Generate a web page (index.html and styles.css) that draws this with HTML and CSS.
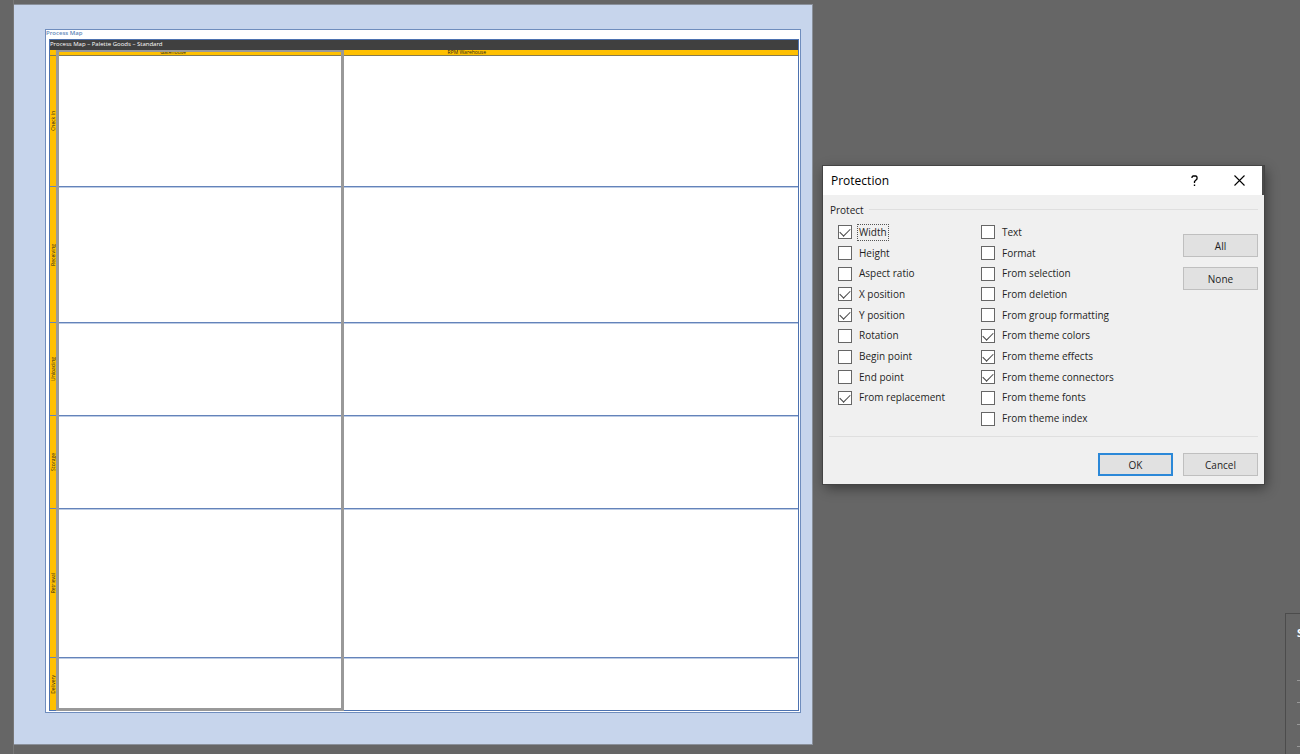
FILE: index.html
```html
<!DOCTYPE html>
<html lang="en">
<head>
  <meta charset="UTF-8" />
  <meta name="viewport" content="width=device-width,initial-scale=1.0" />
  <title>Process Map</title>
  <link rel="stylesheet" href="styles.css">
</head>
<body>
  <main class="workspace">
    <section class="sheet">
      <div class="frame">
        <h1 class="frame-title">Process Map</h1>
        <div class="map">
          <h2 class="map-title">Process Map – Palette Goods – Standard</h2>
          <div class="lanes">
            <div class="corner"></div>
            <div class="lane-head gatehouse">Gatehouse</div>
            <div class="lane-head warehouse">RPM Warehouse</div>

            <div class="phase"><span>Check In</span></div><div class="cell"></div><div class="cell"></div>
            <div class="phase"><span>Receiving</span></div><div class="cell"></div><div class="cell"></div>
            <div class="phase"><span>Unloading</span></div><div class="cell"></div><div class="cell"></div>
            <div class="phase"><span>Storage</span></div><div class="cell"></div><div class="cell"></div>
            <div class="phase"><span>Retrieval</span></div><div class="cell"></div><div class="cell"></div>
            <div class="phase last"><span>Delivery</span></div><div class="cell last"></div><div class="cell last"></div>
            <div class="selection"></div>
          </div>
        </div>
      </div>
    </section>
  </main>

  <form class="dialog" role="dialog" aria-labelledby="dialogTitle">
    <header class="titlebar">
      <h2 id="dialogTitle">Protection</h2>
      <button type="button" class="tb-btn" aria-label="Help">
        <svg width="7" height="12" viewBox="0 0 7 12"><path d="M1 3V2L2 1h3l1 1v2L3.500 6.500V8" fill="none" stroke="#000" stroke-width="1.300"/><path d="M2.800 9.500h1.400V11H2.800z"/></svg>
      </button>
      <button type="button" class="tb-btn" aria-label="Close">
        <svg width="11" height="11" viewBox="0 0 11 11"><path d="M.5.5l10 10M10.500.5l-10 10" fill="none" stroke="#000" stroke-width="1.100"/></svg>
      </button>
    </header>

    <div class="dialog-body">
      <fieldset>
        <legend>Protect</legend>
        <div class="options">
          <div class="checks">
            <label class="focused"><input type="checkbox" checked><span>Width</span></label>
            <label><input type="checkbox"><span>Height</span></label>
            <label><input type="checkbox"><span>Aspect ratio</span></label>
            <label><input type="checkbox" checked><span>X position</span></label>
            <label><input type="checkbox" checked><span>Y position</span></label>
            <label><input type="checkbox"><span>Rotation</span></label>
            <label><input type="checkbox"><span>Begin point</span></label>
            <label><input type="checkbox"><span>End point</span></label>
            <label><input type="checkbox" checked><span>From replacement</span></label>
          </div>
          <div class="checks">
            <label><input type="checkbox"><span>Text</span></label>
            <label><input type="checkbox"><span>Format</span></label>
            <label><input type="checkbox"><span>From selection</span></label>
            <label><input type="checkbox"><span>From deletion</span></label>
            <label><input type="checkbox"><span>From group formatting</span></label>
            <label><input type="checkbox" checked><span>From theme colors</span></label>
            <label><input type="checkbox" checked><span>From theme effects</span></label>
            <label><input type="checkbox" checked><span>From theme connectors</span></label>
            <label><input type="checkbox"><span>From theme fonts</span></label>
            <label><input type="checkbox"><span>From theme index</span></label>
          </div>
          <div class="side-buttons">
            <button type="button" class="btn">All</button>
            <button type="button" class="btn">None</button>
          </div>
        </div>
      </fieldset>
      <footer class="actions">
        <button type="submit" class="btn default">OK</button>
        <button type="button" class="btn">Cancel</button>
      </footer>
    </div>
  </form>

  <aside class="panel">
    <h2>S</h2>
    <div class="panel-rows"><i></i><i></i><i></i><i></i></div>
  </aside>
</body>
</html>
```
FILE: styles.css
```css
* { box-sizing: border-box; margin: 0; padding: 0; }
body {
  position: relative;
  min-height: 100vh;
  background: #666;
  font-family: "Open Sans", "Noto Sans", sans-serif;
  font-size: 10px;
  color: #1e1e1e;
  overflow: hidden;
}
h1, h2 { font-weight: normal; }

/* drawing page */
.workspace {
  display: flex;
  min-height: 100vh;
  margin-left: 13px;
  padding: 4px 0 9px;
  border-left: 1px solid #777;
}
.sheet {
  display: flex;
  width: 62.1%;
  padding: 24px 11px 31px 31px;
  background: #c7d5ec;
  border: 1px solid #8a909a;
  border-left: none;
}
.frame {
  flex: 1;
  display: flex;
  flex-direction: column;
  padding: 0 1px 1px 3px;
  background: #fff;
  border: 1px solid #6f8dbd;
}
.frame-title {
  height: 9px;
  margin-left: -3px;
  font-size: 6px;
  line-height: 7px;
  font-weight: 600;
  color: #6288b8;
}
.map {
  flex: 1;
  display: flex;
  flex-direction: column;
  border: 1px solid #4d72b0;
}
.map-title {
  height: 10px;
  font-size: 6px;
  line-height: 9px;
  color: #fff;
  background: #404040;
}
.lanes {
  position: relative;
  flex: 1;
  display: grid;
  grid-template-columns: 8px 287fr 455fr;
  grid-template-rows: 6px 131fr 136fr 93fr 93fr 149fr 52fr;
}
.corner, .lane-head {
  background: #ffc000;
  border-bottom: 1px solid #857a50;
}
.lane-head {
  font-size: 5px;
  line-height: 5px;
  text-align: center;
  overflow: hidden;
}
.gatehouse { padding-right: 56px; }
.warehouse { padding-right: 208px; }
.phase {
  display: flex;
  align-items: center;
  justify-content: center;
  padding-right: 2px;
  background: #ffc000;
}
.phase span {
  writing-mode: vertical-rl;
  transform: rotate(180deg);
  font-size: 5px;
  line-height: 6px;
}
.phase, .cell { border-bottom: 1px solid #6483ba; }
.cell { box-shadow: 0 1px #bccbe4; }
.last {
  border-bottom: none;
  box-shadow: none;
}
.selection {
  position: absolute;
  inset: 0 auto -1px 6px;
  width: calc((100% - 8px) * 287 / 742 + 2px);
  border: 3px solid #999;
  border-top-width: 2px;
}

/* protection dialog */
.dialog {
  position: absolute;
  top: 166px;
  right: 36px;
  width: 441px;
  background: #f0f0f0;
  box-shadow: 0 0 0 1px #444, 2px 4px 12px rgba(0, 0, 0, .45);
}
.titlebar {
  display: flex;
  align-items: center;
  height: 29px;
  padding-left: 8px;
  background: #fff;
  border-right: 2px solid #4a4a4a;
}
.titlebar h2 {
  flex: 1;
  font-size: 12px;
  line-height: 16px;
  color: #000;
}
.tb-btn {
  display: flex;
  align-items: center;
  justify-content: center;
  width: 45px;
  height: 28px;
  border: none;
  background: none;
}
.dialog-body { padding: 7px 6px 8px; }
fieldset {
  border: none;
  border-bottom: 1px solid #dfdfdf;
}
legend {
  display: flex;
  align-items: center;
  gap: 5px;
  width: 100%;
  height: 15px;
  padding-left: 1px;
}
legend::after {
  content: "";
  flex: 1;
  height: 1px;
  background: #dfdfdf;
}
.options {
  display: flex;
  padding: 5px 0 7px 9px;
}
.checks {
  display: grid;
  grid-template-rows: repeat(10, 1fr);
  width: 143px;
  height: 207px;
}
.checks label {
  display: flex;
  align-items: center;
  gap: 5px;
  white-space: nowrap;
}
.checks span {
  padding: 0 1px;
  border: 1px solid transparent;
  line-height: 15px;
}
.checks .focused span { border: 1px dotted #555; }
input[type="checkbox"] {
  appearance: none;
  width: 14px;
  height: 14px;
  background: #fff;
  border: 1px solid #666;
}
input[type="checkbox"]:checked::before {
  content: "";
  display: block;
  width: 9px;
  height: 5px;
  margin: 2px 0 0 1px;
  border: solid #444;
  border-width: 0 0 1px 1px;
  transform: rotate(-45deg);
}
.side-buttons {
  display: flex;
  flex-direction: column;
  gap: 10px;
  margin-left: auto;
  padding-top: 12px;
}
.btn {
  width: 75px;
  height: 23px;
  font: inherit;
  color: inherit;
  background: #e1e1e1;
  border: 1px solid #bfbfbf;
}
.btn.default { border: 2px solid #2b88d8; }
.actions {
  display: flex;
  justify-content: flex-end;
  gap: 10px;
  padding-top: 16px;
}

/* docked panel at the window edge */
.panel {
  position: absolute;
  right: 0;
  bottom: 0;
  width: 15px;
  height: 141px;
  padding: 11px 0 0 11px;
  border: solid #4c4c4c;
  border-width: 1px 0 0 1px;
  overflow: hidden;
}
.panel h2 {
  font-size: 11px;
  line-height: 15px;
  font-weight: bold;
  color: #fff;
}
.panel-rows {
  display: grid;
  gap: 21px;
  padding-top: 40px;
}
.panel-rows i { height: 1px; background: #999; }
```
